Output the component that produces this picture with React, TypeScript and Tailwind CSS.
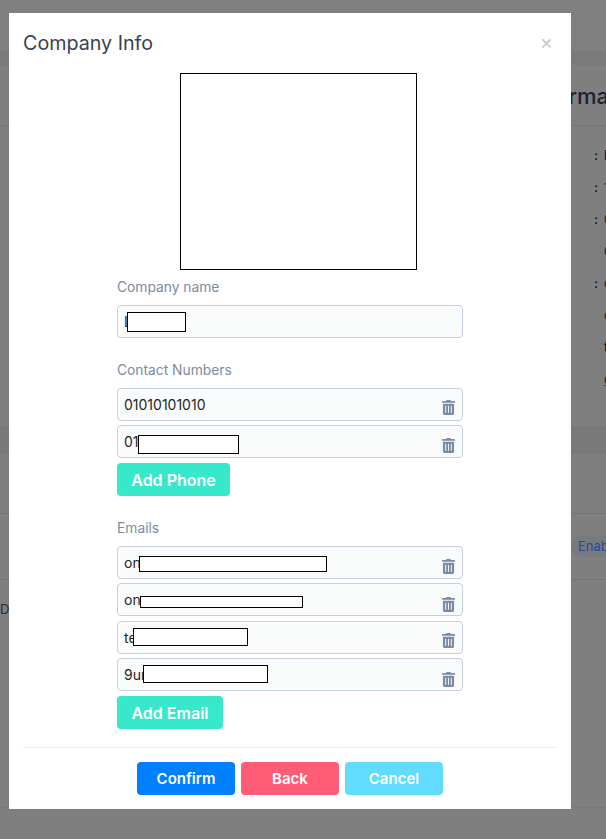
import { FaTrashAlt } from 'react-icons/fa'

const font = "font-['Inter','Liberation_Sans',sans-serif]"

function Redact({ left, top, width, height }: { left: number; top: number; width: number; height: number }) {
  return (
    <span
      className="absolute border border-black bg-white"
      style={{ left, top, width, height }}
    />
  )
}

function Field({
  value,
  box,
  trash = true,
  trashTop = 'top-[11px]',
  className = '',
}: {
  value: string
  box?: { left: number; top: number; width: number; height: number }
  trash?: boolean
  trashTop?: string
  className?: string
}) {
  return (
    <div className={`relative h-[33px] w-full rounded border border-[#c5cfdf] bg-[#fafbfb] ${className}`}>
      <input
        readOnly
        value={value}
        className="h-full w-full bg-transparent px-[6px] text-[14px] text-[#212529] outline-none"
      />
      {box && <Redact {...box} />}
      {trash && <FaTrashAlt className={`absolute right-[7px] h-[15px] w-[13px] text-[#7a8ca5] ${trashTop}`} />}
    </div>
  )
}

function Label({ children }: { children: string }) {
  return <label className="mb-[9px] block h-[18px] text-[13.8px] leading-[18px] text-[#7b8ba5]">{children}</label>
}

function AddButton({ children, width }: { children: string; width: string }) {
  return (
    <button className={`mt-[5px] h-[33px] rounded bg-[#38e8cb] text-[16px] font-semibold text-white ${width}`}>
      {children}
    </button>
  )
}

const infoRows = [
  { colon: true, text: 'I', tone: 'text-[#141c33]' },
  { colon: true, text: '1', tone: 'text-[#3a3a3a]' },
  { colon: true, text: '0', tone: 'text-[#33302c]' },
  { colon: false, text: '0', tone: 'text-[#2c3038]' },
  { colon: true, text: 'o', tone: 'text-[#33302c]' },
  { colon: false, text: 'o', tone: 'text-[#33302c]' },
  { colon: false, text: 't', tone: 'text-[#1c1414]' },
  { colon: false, text: 'g', tone: 'text-[#33302c]' },
]

function Background() {
  return (
    <div className={`relative h-[839px] w-[606px] overflow-hidden bg-[#7f7f7f] ${font}`}>
      <div className="h-[51px] bg-[#808080]" />
      <div className="h-[14px] bg-[#7a7a7a]" />
      <div className="flex h-[61px] items-center justify-end overflow-hidden whitespace-nowrap border-b border-[#757575] pt-[2px] text-[22px] font-medium text-[#1a2230]">
        <span className="mr-[-3px]">rma</span>
      </div>
      <div className="flex h-[300px] flex-col pt-[14px]">
        {infoRows.map((row, i) => (
          <div key={i} className="flex h-[32px] items-center whitespace-nowrap pl-[594px] text-[13px] font-semibold">
            <span className="w-[10px] shrink-0 text-[#1c2535]">{row.colon ? ':' : ''}</span>
            <span className={`shrink-0 ${row.tone}`}>{row.text}</span>
          </div>
        ))}
      </div>
      <div className="h-[28px] bg-[#797979]" />
      <div className="h-[60px] border-b border-[#747474]" />
      <div className="flex h-[66px] items-center justify-end border-b border-[#747474] pr-0">
        <span className="flex h-[21px] w-[35px] items-center whitespace-nowrap rounded-l-[10px] bg-[#777a80] pl-[7px] text-[13px] text-[#1f4b99]">
          Enab
        </span>
      </div>
      <div className="pt-[20px] text-[13px] text-[#222a3a]">D</div>
      <div className="mt-[187px] border-t border-[#787878]" />
    </div>
  )
}

export default function App() {
  return (
    <div className={`relative h-[839px] w-[606px] overflow-hidden ${font}`}>
      <Background />
      {/* Modal */}
      <div className="absolute left-[9px] top-[13px] flex h-[796px] w-[562px] flex-col bg-white px-[14px]">
        <header className="flex h-[60px] shrink-0 items-center justify-between">
          <h2 className="pt-[2px] text-[19.7px] font-normal text-[#39424f]">Company Info</h2>
          <span className="mb-[2px] mr-[4px] text-[20px] text-[#c9c9c9]">×</span>
        </header>
        <div className="ml-[157px] h-[197px] w-[237px] shrink-0 border border-black bg-white" />
        <div className="ml-[94px] mt-[8px] w-[346px] shrink-0">
          <Label>Company name</Label>
          <Field value="L" trash={false} box={{ left: 9, top: 6, width: 59, height: 20 }} />

          <div className="mt-[23px]">
            <Label>Contact Numbers</Label>
            <div className="flex flex-col gap-[4px]">
              <Field value="01010101010" />
              <Field value="01" trashTop="top-[12px]" box={{ left: 20, top: 9, width: 101, height: 19 }} />
            </div>
            <AddButton width="w-[113px]">Add Phone</AddButton>
          </div>

          <div className="mt-[23px]">
            <Label>Emails</Label>
            <div className="flex flex-col gap-[4px]">
              <Field value="on" trashTop="top-[12px]" box={{ left: 21, top: 9, width: 188, height: 16 }} />
              <Field value="on" trashTop="top-[13px]" box={{ left: 22, top: 12, width: 163, height: 12 }} />
              <Field value="te" className="mt-[1px]" box={{ left: 15, top: 6, width: 115, height: 18 }} />
              <Field value="9ur" trashTop="top-[13px]" box={{ left: 25, top: 6, width: 125, height: 18 }} />
            </div>
            <AddButton width="w-[106px]">Add Email</AddButton>
          </div>
        </div>
        <footer className="mt-[18px] flex justify-center gap-[6px] border-t border-[#e9ecef] pt-[14px]">
          <button className="h-[33px] w-[98px] rounded bg-[#0080ff] pt-[2px] text-[15px] font-semibold text-white">Confirm</button>
          <button className="h-[33px] w-[98px] rounded bg-[#ff5c75] pt-[2px] text-[15px] font-semibold text-white">Back</button>
          <button className="h-[33px] w-[98px] rounded bg-[#61dcff] pt-[2px] text-[15px] font-semibold text-white">Cancel</button>
        </footer>
      </div>
    </div>
  )
}
